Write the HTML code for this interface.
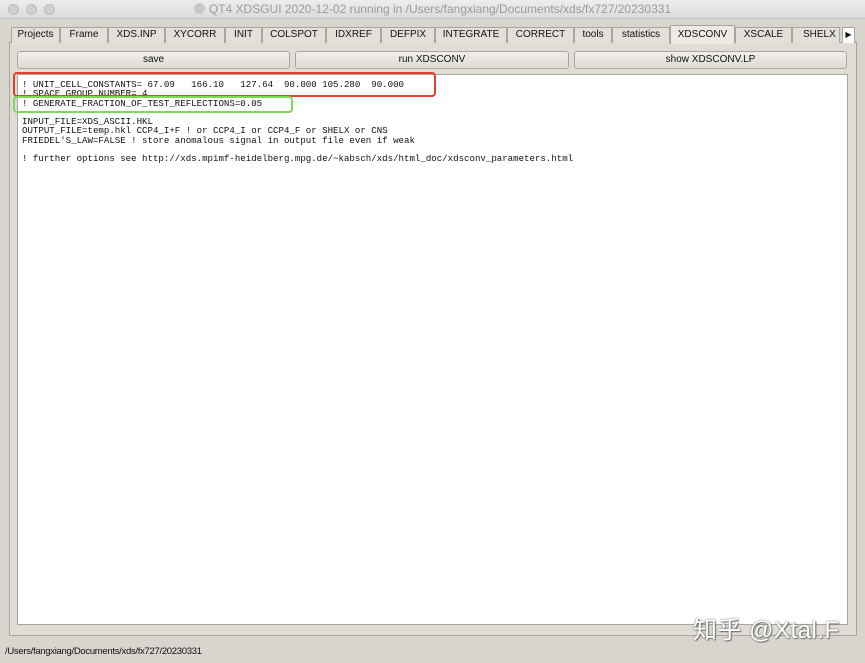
<!DOCTYPE html>
<html><head><meta charset="utf-8"><style>
*{margin:0;padding:0;box-sizing:border-box}
body{width:865px;height:663px;background:#d8d5ce;font-family:"Liberation Sans",sans-serif;position:relative;overflow:hidden}
.title{position:absolute;left:0;top:0;width:865px;height:19px;background:linear-gradient(#ededed,#dcdcdc);border-bottom:1px solid #c4c4c4;text-align:center;font-size:12px;line-height:19px;color:#9a9a9a}
.dot{position:absolute;top:4px;width:11px;height:11px;border-radius:50%;background:#cfcfcf;border:1px solid #bdbdbd}
.tabs{position:absolute;top:27px;left:0;height:16px}
.tab{position:absolute;top:0;height:16px;border:1px solid #a8a59e;border-bottom:none;background:#e3e0da;font-size:10px;line-height:14px;text-align:center;color:#111}
.tab.sel{top:-2px;height:19px;background:#edeae4;line-height:17px}
.pane{position:absolute;left:9px;top:42px;width:848px;height:594px;border:1px solid #a8a59e;background:#e0ddd6}
.btn{position:absolute;top:51px;height:18px;border:1px solid #a9a6a0;border-radius:3px;background:linear-gradient(#f1efea,#dedbd4);font-size:10px;line-height:16px;text-align:center;color:#111}
.ta{position:absolute;left:17px;top:74px;width:831px;height:551px;background:#fff;border:1px solid #a8a59e}
pre{position:absolute;left:22px;top:80px;font-family:"Liberation Mono",monospace;font-size:9.1px;line-height:9.3px;color:#111}
.box{position:absolute;border-radius:4px}
.status{position:absolute;left:5px;top:646px;font-size:9.5px;color:#111;letter-spacing:-0.3px}
.wm{position:absolute;left:693px;top:610px;font-family:"Liberation Sans","Noto Sans CJK SC",sans-serif;font-size:24px;letter-spacing:0.5px;color:#fff;text-shadow:0 0 2px #666,1px 1px 1px #777}
</style></head><body>
<div class="title"><span style="display:inline-block;width:11px;height:11px;border-radius:50%;background:#c8c8c8;vertical-align:-1px;margin-right:4px"></span>QT4 XDSGUI 2020-12-02 running in /Users/fangxiang/Documents/xds/fx727/20230331</div>
<div class="dot" style="left:8px"></div><div class="dot" style="left:26px"></div><div class="dot" style="left:44px"></div>
<div class="pane"></div>
<div class="tabs">
<div class="tab" style="left:11px;width:49px">Projects</div>
<div class="tab" style="left:60px;width:48px">Frame</div>
<div class="tab" style="left:108px;width:57px">XDS.INP</div>
<div class="tab" style="left:165px;width:60px">XYCORR</div>
<div class="tab" style="left:225px;width:37px">INIT</div>
<div class="tab" style="left:262px;width:64px">COLSPOT</div>
<div class="tab" style="left:326px;width:55px">IDXREF</div>
<div class="tab" style="left:381px;width:54px">DEFPIX</div>
<div class="tab" style="left:435px;width:72px">INTEGRATE</div>
<div class="tab" style="left:507px;width:67px">CORRECT</div>
<div class="tab" style="left:574px;width:38px">tools</div>
<div class="tab" style="left:612px;width:58px">statistics</div>
<div class="tab sel" style="left:670px;width:65px">XDSCONV</div>
<div class="tab" style="left:735px;width:57px">XSCALE</div>
<div class="tab" style="left:792px;width:48px;text-align:left;padding-left:10px;overflow:hidden">SHELX</div>
<div class="tab" style="left:842px;width:13px;background:#fff;font-size:8px">▶</div>
</div>
<div class="btn" style="left:17px;width:273px">save</div>
<div class="btn" style="left:295px;width:274px">run XDSCONV</div>
<div class="btn" style="left:574px;width:273px">show XDSCONV.LP</div>
<div class="ta"></div>
<pre>! UNIT_CELL_CONSTANTS= 67.09   166.10   127.64  90.000 105.280  90.000
! SPACE_GROUP_NUMBER= 4
! GENERATE_FRACTION_OF_TEST_REFLECTIONS=0.05

INPUT_FILE=XDS_ASCII.HKL
OUTPUT_FILE=temp.hkl CCP4_I+F ! or CCP4_I or CCP4_F or SHELX or CNS
FRIEDEL'S_LAW=FALSE ! store anomalous signal in output file even if weak

! further options see http://xds.mpimf-heidelberg.mpg.de/~kabsch/xds/html_doc/xdsconv_parameters.html</pre>
<div class="box" style="left:13px;top:72px;width:423px;height:25px;border:2px solid #e0402e"></div>
<div class="box" style="left:13px;top:96px;width:280px;height:17px;border:2px solid #7ed957"></div>
<div class="wm">知乎 @Xtal.F</div>
<div class="status">/Users/fangxiang/Documents/xds/fx727/20230331</div>
</body></html>
